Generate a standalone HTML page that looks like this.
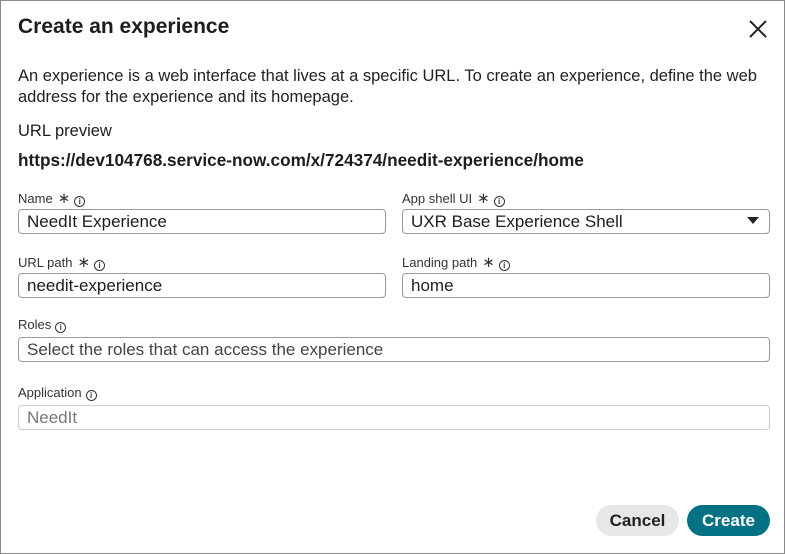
<!DOCTYPE html>
<html><head><style>
*{box-sizing:border-box;margin:0;padding:0}
body{width:785px;height:554px;background:#fff;font-family:"Liberation Sans",sans-serif;color:#1d1d1d;position:relative;overflow:hidden}
.frame{position:absolute;inset:0;border:1px solid #8a8a8a}
.abs{position:absolute;white-space:nowrap}
.lbl{font-size:13px;color:#333}
.inp{position:absolute;height:25px;border:1px solid #9a9a9a;border-radius:4px;font-size:17px;padding-left:8px;line-height:23px;color:#1d1d1d}
.ic{display:inline-block;width:11px;height:11px;border:1px solid #333;border-radius:50%;font-size:8px;line-height:9px;text-align:center;vertical-align:-1px;margin-left:4px;font-weight:bold}
.st{font-size:15px;margin-left:5px}
.btn{position:absolute;top:505px;height:31px;border-radius:16px;font-size:17px;font-weight:bold;text-align:center;line-height:31px}
</style></head><body>
<div class="frame"></div>
<div class="abs" style="left:18px;top:15px;font-size:21px;font-weight:bold">Create an experience</div>
<svg class="abs" style="left:748px;top:19px" width="20" height="20"><path d="M2 2L18 18M18 2L2 18" stroke="#222" stroke-width="2"/></svg>
<div class="abs" style="left:18px;top:66px;font-size:16.5px;line-height:21px;color:#222">An experience is a web interface that lives at a specific URL. To create an experience, define the web<br>address for the experience and its homepage.</div>
<div class="abs" style="left:18px;top:122px;font-size:16.5px">URL preview</div>
<div class="abs" style="left:18px;top:150px;font-size:17.2px;font-weight:bold">https://dev104768.service-now.com/x/724374/needit-experience/home</div>
<div class="abs lbl" style="left:18px;top:189px">Name<span class="st">∗</span><span class="ic">i</span></div>
<div class="inp" style="left:18px;top:209px;width:368px">NeedIt Experience</div>
<div class="abs lbl" style="left:402px;top:189px">App shell UI<span class="st">∗</span><span class="ic">i</span></div>
<div class="inp" style="left:402px;top:209px;width:368px">UXR Base Experience Shell</div>
<svg class="abs" style="left:747px;top:217px" width="12" height="8"><path d="M0 0H12L6 7Z" fill="#222"/></svg>
<div class="abs lbl" style="left:18px;top:253px">URL path<span class="st">∗</span><span class="ic">i</span></div>
<div class="inp" style="left:18px;top:273px;width:368px">needit-experience</div>
<div class="abs lbl" style="left:402px;top:253px">Landing path<span class="st">∗</span><span class="ic">i</span></div>
<div class="inp" style="left:402px;top:273px;width:368px">home</div>
<div class="abs lbl" style="left:18px;top:317px">Roles<span class="ic">i</span></div>
<div class="inp" style="left:18px;top:337px;width:752px;color:#444">Select the roles that can access the experience</div>
<div class="abs lbl" style="left:18px;top:385px">Application<span class="ic">i</span></div>
<div class="inp" style="left:18px;top:405px;width:752px;color:#777;border-color:#ccc">NeedIt</div>
<div class="btn" style="left:596px;width:83px;background:#e6e7e9;color:#222">Cancel</div>
<div class="btn" style="left:687px;width:83px;background:#047184;color:#fff">Create</div>
</body></html>
